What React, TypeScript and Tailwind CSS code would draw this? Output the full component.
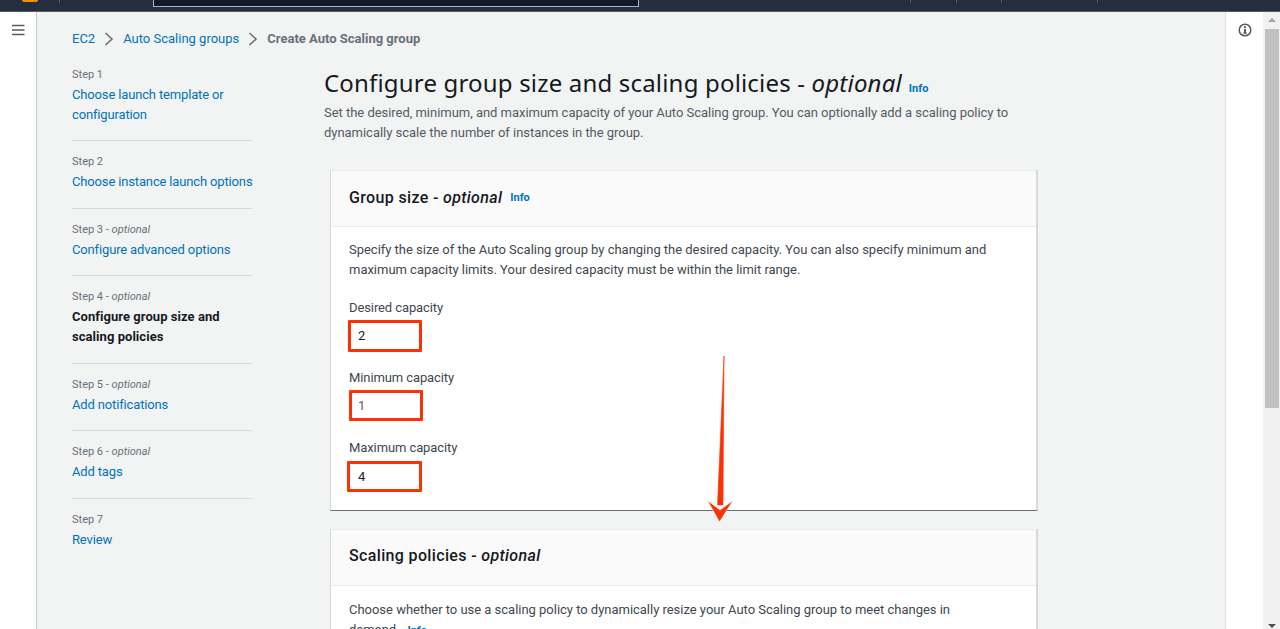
import React from 'react';

const font = { fontFamily: 'Roboto, "Noto Sans", sans-serif' };

interface StepProps {
  step: string;
  optional?: boolean;
  lines: string[];
  active?: boolean;
  last?: boolean;
}

const Step: React.FC<StepProps> = ({ step, optional, lines, active, last }) => (
  <div className={last ? '' : 'border-b border-[#d5dbdb] pb-[15.5px] mb-[11px]'}>
    <div className="text-[11px] leading-[20px] text-[#687078] h-[20px]">
      {step}
      {optional && <span> - <i>optional</i></span>}
    </div>
    {lines.map((line) => (
      <div
        key={line}
        className={`text-[13px] leading-[20px] whitespace-nowrap ${active ? 'font-bold tracking-[0.05px] text-[#16191f]' : 'tracking-[-0.15px] text-[#0073bb]'}`}
      >
        {line}
      </div>
    ))}
  </div>
);

interface FieldProps {
  label: string;
  value: string;
  boxClass: string;
  textClass: string;
}

const Field: React.FC<FieldProps> = ({ label, value, boxClass, textClass }) => (
  <div className="h-[70px]">
    <div className="text-[13px] leading-[20px] text-[#414750] h-[22px] tracking-[-0.1px]">{label}</div>
    <div className={`${boxClass} border-[3px] border-[#fa3306] bg-white rounded-[1px] text-[13px] ${textClass}`}>
      {value}
    </div>
  </div>
);

const Chevron = () => (
  <svg width="10" height="14" viewBox="0 0 10 14" className="mx-[9px] shrink-0" fill="none" stroke="#687078" strokeWidth="1.6">
    <path d="M1.5 1 L8 7 L1.5 13" />
  </svg>
);

const App: React.FC = () => {
  return (
    <div className="relative w-[1280px] h-[629px] overflow-hidden bg-white flex flex-col" style={font}>
      {/* top nav, mostly scrolled off */}
      <header className="relative h-[12px] shrink-0 bg-[#232f3e] border-b border-[#545b64] flex">
        <div className="w-[16px] h-[2px] ml-[22px] bg-[#f29100] rounded-b-full" />
        <div className="w-px h-[3px] bg-[#545b64] ml-[21px]" />
        <div className="ml-[93px] w-[486px] h-[7px] bg-[#0f1b2a] border border-t-0 border-[#aab7b8]" />
        <div className="w-px h-[3px] bg-[#545b64] ml-[271px]" />
        <div className="w-px h-[3px] bg-[#545b64] ml-[45px]" />
        <div className="w-px h-[3px] bg-[#545b64] ml-[44px]" />
        <div className="w-px h-[3px] bg-[#545b64] ml-[95px]" />
      </header>

      <div className="flex flex-1 min-h-0">
        {/* left nav rail */}
        <div className="w-[37px] shrink-0 bg-white border-r border-[#c5caca] pt-[12px] pl-[11px]">
          <svg width="14" height="12" viewBox="0 0 14 12" fill="none" stroke="#545b64" strokeWidth="1.5">
            <path d="M1 1.5 H13.5 M1 6 H13.5 M1 10.5 H13.5" />
          </svg>
        </div>

        {/* main column */}
        <main className="w-[1189px] shrink-0 bg-[#f2f3f3] border-r border-[#dfe2e2] pl-[35px] pt-[17px] overflow-hidden">
          <nav className="flex items-center h-[20px] text-[13px] whitespace-nowrap">
            <span className="text-[#0073bb]">EC2</span>
            <Chevron />
            <span className="text-[#0073bb]">Auto Scaling groups</span>
            <Chevron />
            <span className="font-bold text-[#687078]">Create Auto Scaling group</span>
          </nav>

          <div className="flex mt-[15px]">
            <aside className="w-[180px] shrink-0 pt-[0.5px]">
              <Step step="Step 1" lines={['Choose launch template or', 'configuration']} />
              <Step step="Step 2" lines={['Choose instance launch options']} />
              <Step step="Step 3" optional lines={['Configure advanced options']} />
              <Step step="Step 4" optional active lines={['Configure group size and', 'scaling policies']} />
              <Step step="Step 5" optional lines={['Add notifications']} />
              <Step step="Step 6" optional lines={['Add tags']} />
              <Step step="Step 7" lines={['Review']} last />
            </aside>

            <section className="ml-[72px] w-[720px] shrink-0 pt-[2px]">
              <div className="flex items-baseline h-[36px] whitespace-nowrap">
                <h1 className="text-[24px] leading-[34px] tracking-[0.18px] text-[#16191f]" style={{ fontFamily: '"Noto Sans", sans-serif' }}>
                  Configure group size and scaling policies - <i>optional</i>
                </h1>
                <span className="ml-[7px] text-[11px] font-bold text-[#0073bb]">Info</span>
              </div>
              <p className="text-[13px] leading-[20px] tracking-[-0.03px] text-[#545b64] mt-[1px] w-[700px]">
                Set the desired, minimum, and maximum capacity of your Auto Scaling group. You can optionally add a scaling policy to dynamically scale the number of instances in the group.
              </p>

              <div className="ml-[6px] w-[708px] mt-[27px] bg-white border-r-2 border-l border-[#d5dbdb] border-b border-b-[#687078]">
                <div className="h-[57px] bg-[#fafafa] border-y border-[#eaeded] flex items-center pl-[18px] pb-[2px]">
                  <span className="text-[16px] font-medium tracking-[0.35px] text-[#16191f]">Group size - <i>optional</i></span>
                  <span className="ml-[8px] text-[11px] font-bold text-[#0073bb] pt-[2px]">Info</span>
                </div>
                <div className="pl-[18px] pr-[14px] pt-[13px] h-[283px]">
                  <p className="text-[13px] leading-[20px] tracking-[-0.02px] text-[#414750] h-[58px]">
                    Specify the size of the Auto Scaling group by changing the desired capacity. You can also specify minimum and maximum capacity limits. Your desired capacity must be within the limit range.
                  </p>
                  <Field label="Desired capacity" value="2" boxClass="w-[74px] h-[32px] -ml-[1px]" textClass="leading-[26px] pl-[7px] text-[#16191f]" />
                  <Field label="Minimum capacity" value="1" boxClass="w-[74px] h-[31px]" textClass="leading-[25px] pl-[6px] text-[#545b64]" />
                  <Field label="Maximum capacity" value="4" boxClass="w-[75px] h-[31px] -ml-[2px] mt-[1px]" textClass="leading-[25px] pl-[8px] text-[#16191f]" />
                </div>
              </div>

              <div className="ml-[6px] w-[708px] mt-[18px] pb-[40px] bg-white border-r-2 border-l border-[#d5dbdb]">
                <div className="h-[57px] bg-[#fafafa] border-y border-[#eaeded] flex items-center pl-[18px] pb-[4px]">
                  <span className="text-[16px] font-medium tracking-[0.35px] text-[#16191f]">Scaling policies - <i>optional</i></span>
                </div>
                <div className="pl-[18px] pr-[60px] pt-[14px]">
                  <p className="text-[13px] leading-[20px] tracking-[-0.02px] text-[#414750]">
                    Choose whether to use a scaling policy to dynamically resize your Auto Scaling group to meet changes in demand.
                    <span className="ml-[8px] text-[11px] font-bold text-[#0073bb]">Info</span>
                  </p>
                </div>
              </div>
            </section>
          </div>
        </main>

        {/* tools rail */}
        <div className="w-[37px] shrink-0 bg-white flex justify-center pt-[11px]">
          <svg width="14" height="14" viewBox="0 0 14 14" fill="none">
            <circle cx="7" cy="7" r="5.8" stroke="#545b64" strokeWidth="1.5" />
            <rect x="6" y="6" width="2" height="4.5" fill="#545b64" />
            <rect x="5.2" y="9.5" width="3.6" height="1.2" fill="#545b64" />
            <rect x="6" y="3.2" width="2" height="1.8" fill="#545b64" />
          </svg>
        </div>

        {/* scrollbar */}
        <div className="w-[17px] shrink-0 bg-[#f1f1f1] flex flex-col items-center relative">
          <div className="mt-[6px] w-0 h-0 border-x-[4px] border-x-transparent border-b-[4px] border-b-[#a3a3a3]" />
          <div className="mt-[7px] w-[14px] h-[379px] bg-[#c1c1c1] ml-[1px]" />
          <div className="mt-auto mb-[1px] w-0 h-0 border-x-[4px] border-x-transparent border-t-[4px] border-t-[#505050]" />
        </div>
      </div>

      {/* annotation arrow pasted on the screenshot */}
      <svg className="absolute left-[700px] top-[350px]" width="40" height="180" viewBox="0 0 40 180" fill="none">
        <path d="M24 6 L23 155 L17.5 155 Z" fill="#fa3306" stroke="#fa3306" strokeWidth="0.6" />
        <path d="M7.5 150.5 L19.5 172 L33 150.5 L20 160 Z" fill="#fa3306" stroke="#ffffff" strokeWidth="0.6" />
      </svg>
    </div>
  );
};

export default App;
